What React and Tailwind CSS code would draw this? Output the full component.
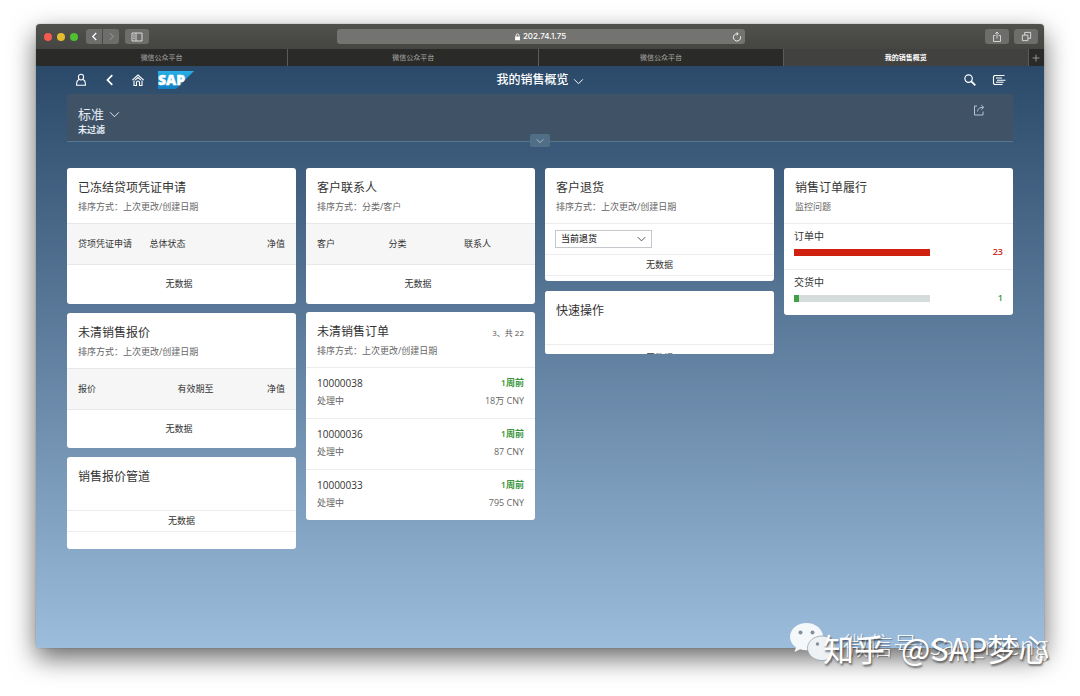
import React from "react";

const FONT = "font-['Open_Sans','Noto_Sans_CJK_SC',sans-serif]";

function Chevron({ className }) {
  return (
    <svg viewBox="0 0 12 8" className={className} fill="none" stroke="currentColor" strokeWidth="1.1" aria-hidden="true">
      <path d="M1 1.5 6 6.5 11 1.5" />
    </svg>
  );
}

function TitleBar() {
  return (
    <div className="flex h-[25px] items-center bg-gradient-to-b from-[#50504d] to-[#454542] pr-[6px] pl-[8px]">
      <div className="flex flex-1 items-center">
        <div className="flex gap-[5px]">
          <span className="size-2 rounded-full bg-[#f6594f]" />
          <span className="size-2 rounded-full bg-[#e3bc2f]" />
          <span className="size-2 rounded-full bg-[#4fc031]" />
        </div>
        <div className="ml-[8px] flex gap-px">
          <button aria-label="后退" className="flex h-[15px] w-4 items-center justify-center rounded-l-[3px] bg-[#6d6d6b] text-white">
            <svg viewBox="0 0 8 10" className="h-[9px] w-[7px]" fill="none" stroke="currentColor" strokeWidth="1.4"><path d="M6 1 2 5l4 4" /></svg>
          </button>
          <button aria-label="前进" className="flex h-[15px] w-4 items-center justify-center rounded-r-[3px] bg-[#6d6d6b] text-[#929290]">
            <svg viewBox="0 0 8 10" className="h-[9px] w-[7px]" fill="none" stroke="currentColor" strokeWidth="1.2"><path d="M2 1l4 4-4 4" /></svg>
          </button>
        </div>
        <button aria-label="边栏" className="ml-[6px] flex h-[15px] w-6 items-center justify-center rounded-[3px] bg-[#6d6d6b] text-[#e4e4e4]">
          <svg viewBox="0 0 12 10" className="h-[10px] w-3" fill="none" stroke="currentColor" strokeWidth=".9"><path d="M1 1h10v8H1zM5 1v8M2.300 3h1.500M2.300 4.800h1.500M2.300 6.600h1.500" /></svg>
        </button>
      </div>
      <div className="flex h-[15px] w-[41%] items-center rounded-[3px] bg-[#737371] pr-[3px] pl-[11px] text-white">
        <div className="flex flex-1 items-center justify-center gap-[2px] text-[8px] leading-[15px] font-medium font-['Inter',sans-serif]">
          <svg viewBox="0 0 8 9" className="h-[8px] w-[7px]" aria-hidden="true"><path d="M1.2 4h5.6v4.2H1.2z" fill="currentColor" /><path d="M2.4 4V2.6a1.6 1.6 0 0 1 3.2 0V4" fill="none" stroke="currentColor" strokeWidth="1" /></svg>
          202.74.1.75
        </div>
        <button aria-label="重新加载">
          <svg viewBox="0 0 10 10" className="size-[10px]" fill="none" stroke="currentColor" strokeWidth=".9"><path d="M8.4 4.2A3.6 3.6 0 1 1 5 1.8h1M4.6.3 6.2 1.8 4.6 3.4" /></svg>
        </button>
      </div>
      <div className="flex flex-1 justify-end gap-[5px] text-[#dededc]">
        <button aria-label="共享" className="flex h-[15px] w-6 items-center justify-center rounded-[3px] bg-[#6d6d6b]">
          <svg viewBox="0 0 10 12" className="h-3 w-[10px]" fill="none" stroke="currentColor" strokeWidth=".9"><path d="M3.4 4.5H1.5v6h7v-6H6.6M5 7.5V1M3.2 2.8 5 1l1.8 1.8" /></svg>
        </button>
        <button aria-label="标签页概览" className="flex h-[15px] w-6 items-center justify-center rounded-[3px] bg-[#6d6d6b]">
          <svg viewBox="0 0 12 12" className="size-[11px]" fill="none" stroke="currentColor" strokeWidth="1"><path d="M1.5 4.5h6v6h-6zM4 4.5v-3h6.500v6.500h-3" /></svg>
        </button>
      </div>
    </div>
  );
}

function TabBar() {
  const tab = "flex h-full items-center justify-center border-r border-[#5c5c5a]";
  return (
    <nav className="grid h-[17px] grid-cols-[252fr_251fr_244fr_245fr_15fr] bg-[#2a2a28] text-[7px] leading-[16px] text-[#a9a9a7]">
      <button className={tab}>微信公众平台</button>
      <button className={tab}>微信公众平台</button>
      <button className={tab}>微信公众平台</button>
      <button className="flex h-full items-center justify-center border-r border-[#5c5c5a] bg-[#41413f] font-bold text-white">我的销售概览</button>
      <button aria-label="新标签页" className="flex items-center justify-center">
        <svg viewBox="0 0 8 8" className="size-2" stroke="currentColor" strokeWidth=".8"><path d="M4 .5v7M.5 4h7" /></svg>
      </button>
    </nav>
  );
}

function SapLogo() {
  return (
    <svg viewBox="0 0 36 18" className="h-[18px] w-9" role="img" aria-label="SAP">
      <defs>
        <linearGradient id="sap" x1="0" y1="0" x2="0" y2="1">
          <stop offset="0" stopColor="#27b0e8" />
          <stop offset="1" stopColor="#1180c4" />
        </linearGradient>
      </defs>
      <path d="M0 0h36L18 18H0z" fill="url(#sap)" />
      <text x="0" y="14" fontFamily="Open Sans" fontWeight="800" fontSize="14" fill="#fff" stroke="#fff" strokeWidth=".4">SAP</text>
    </svg>
  );
}

function ShellBar() {
  return (
    <header className="flex h-[28px] items-center px-[38px] text-white">
      <div className="flex flex-1 items-center">
        <button aria-label="用户">
          <svg viewBox="0 0 14 14" className="size-[14px]" fill="none" stroke="currentColor" strokeWidth="1.100"><path d="M7 1.200c1.600 0 2.600 1.200 2.600 2.800S8.600 7 7 7 4.400 5.600 4.400 4 5.400 1.200 7 1.200zM4.800 6.600C3.200 7.400 2.600 9 2.600 11v1.300h8.800V11c0-2-.6-3.600-2.200-4.400" /></svg>
        </button>
        <button aria-label="返回" className="ml-[15px]">
          <svg viewBox="0 0 14 14" className="size-[14px]" fill="none" stroke="currentColor" strokeWidth="1.700"><path d="M9.300 2.200 4.500 7l4.800 4.800" /></svg>
        </button>
        <button aria-label="主页" className="ml-[14px]">
          <svg viewBox="0 0 14 14" className="size-[14px]" fill="none" stroke="currentColor" strokeWidth="1.100"><path d="M1.300 7.200 7 2l5.700 5.200M3 7.500v5h2.500V9.200C5.500 8.400 6.100 8 7 8s1.500.4 1.500 1.200v3.300H11v-5M4 7.200l3-2.700 3 2.700" /></svg>
        </button>
        <span className="ml-[13px]"><SapLogo /></span>
      </div>
      <button className="flex items-center gap-[4px] text-[12px] leading-[18px] font-medium">
        我的销售概览
        <Chevron className="mt-[3px] h-[7px] w-[11px]" />
      </button>
      <div className="flex flex-1 justify-end gap-[15px]">
        <button aria-label="搜索">
          <svg viewBox="0 0 14 14" className="size-[14px]" fill="none" stroke="currentColor" strokeWidth="1.200"><circle cx="5.600" cy="5.600" r="3.700" /><path d="m8.300 8.300 4 4" strokeWidth="1.800" /></svg>
        </button>
        <button aria-label="通知">
          <svg viewBox="0 0 14 14" className="size-[14px]" fill="none" stroke="currentColor" strokeWidth="1.100"><path d="M12.500 2.500H2.500L1.500 3.500v7l1 1h8M4 5h6M5 7.200h8.500M4 9.300h7.500" /></svg>
        </button>
      </div>
    </header>
  );
}

function FilterBar() {
  return (
    <section className="relative mx-[31px] flex h-[48px] justify-between border-b border-[#54788e] bg-[#3f5266] px-[11px] text-[#e4edf5]">
      <div className="pt-[11px]">
        <button className="flex items-center gap-[5px] text-[13px] leading-[18px]">
          标准
          <Chevron className="h-[7px] w-[11px]" />
        </button>
        <p className="text-[9px] leading-[14px] font-bold">未过滤</p>
      </div>
      <button aria-label="共享" className="mt-[10px] mr-[17px] self-start text-[#b3c5d6]">
        <svg viewBox="0 0 12 12" className="size-3" fill="none" stroke="currentColor" strokeWidth="1"><path d="M4 2H1.500v9h8.500V7.500M4.500 7.500C4.700 4.800 6.500 3.300 10.500 3.300M8.300 1.200l2.400 2.100-2.400 2.200" /></svg>
      </button>
      <button aria-label="展开页眉" className="absolute -bottom-[6px] left-1/2 flex h-[13px] w-[20px] -translate-x-1/2 items-center justify-center rounded-[2px] bg-[#506f86] text-[#cbd9e4]">
        <Chevron className="h-[6px] w-[8px]" />
      </button>
    </section>
  );
}

function Card({ title, subtitle, counter, children }) {
  return (
    <article className="overflow-hidden rounded-[3px] bg-white text-[9px] leading-[12px] text-[#333]">
      <header className="flex min-h-[55px] justify-between px-[11px] pt-[11px]">
        <div>
          <h2 className="text-[12px] leading-[18px]">{title}</h2>
          {subtitle && <p className="mt-[4px] text-[#666]">{subtitle}</p>}
        </div>
        {counter && <span className="mt-[4px] text-[8px] text-[#555]">{counter}</span>}
      </header>
      {children}
    </article>
  );
}

function EmptyTable({ columns }) {
  return (
    <table className="w-full table-fixed border-collapse">
      <thead>
        <tr className="h-[41px] border-y border-[#e8e8e8] bg-[#f6f6f6]">
          {columns.map(([label, cls]) => (
            <th key={label} className={`${cls} font-normal whitespace-nowrap`}>{label}</th>
          ))}
        </tr>
      </thead>
      <tbody>
        <tr className="h-[39px]">
          <td colSpan={columns.length} className="pr-[5px] text-center">无数据</td>
        </tr>
      </tbody>
    </table>
  );
}

const orders = [
  ["10000038", "18万 CNY"],
  ["10000036", "87 CNY"],
  ["10000033", "795 CNY"],
];

function Board() {
  return (
    <main className="grid grid-cols-4 items-start gap-[10px] px-[31px] pt-[26px]">
      <div className="flex flex-col gap-[9px]">
        <Card title="已冻结贷项凭证申请" subtitle="排序方式：上次更改/创建日期">
          <EmptyTable columns={[
            ["贷项凭证申请", "w-[36%] pl-[11px] text-left"],
            ["总体状态", "text-left"],
            ["净值", "pr-[11px] text-right"],
          ]} />
        </Card>
        <Card title="未清销售报价" subtitle="排序方式：上次更改/创建日期">
          <EmptyTable columns={[
            ["报价", "w-[36%] pl-[11px] text-left"],
            ["有效期至", "w-[28%] text-right"],
            ["净值", "pr-[11px] text-right"],
          ]} />
        </Card>
        <Card title="销售报价管道">
          <p className="-mt-[2px] mb-[17px] border-y border-[#ececec] py-[4px] text-center">无数据</p>
        </Card>
      </div>

      <div className="flex flex-col gap-[8px]">
        <Card title="客户联系人" subtitle="排序方式：分类/客户">
          <EmptyTable columns={[
            ["客户", "w-[36%] pl-[11px] text-left"],
            ["分类", "w-[33%] text-left"],
            ["联系人", "text-left"],
          ]} />
        </Card>
        <Card title="未清销售订单" subtitle="排序方式：上次更改/创建日期" counter="3、共 22">
          <ul>
            {orders.map(([id, amount]) => (
              <li key={id} className="flex h-[51px] justify-between border-t border-[#ececec] px-[11px] pt-[8px]">
                <div>
                  <p className="text-[10px] leading-[14px]">{id}</p>
                  <p className="mt-[5px] text-[#666]">处理中</p>
                </div>
                <div className="text-right">
                  <p className="leading-[14px] font-semibold text-[#3c943c]">1周前</p>
                  <p className="mt-[5px] text-[#666]">{amount}</p>
                </div>
              </li>
            ))}
          </ul>
        </Card>
      </div>

      <div className="flex flex-col gap-[10px]">
        <Card title="客户退货" subtitle="排序方式：上次更改/创建日期">
          <div className="border-t border-[#ececec] px-[10px] py-[6px]">
            <div className="relative w-[97px] text-[#333]">
              <select aria-label="视图" className="block h-[18px] w-full appearance-none border border-[#c4c8cc] bg-white pl-[5px] text-[9px] leading-[14px] font-medium">
                <option>当前退货</option>
              </select>
              <Chevron className="pointer-events-none absolute top-[6px] right-[6px] h-[6px] w-[9px]" />
            </div>
          </div>
          <p className="mb-[5px] border-y border-[#ececec] py-[4px] text-center">无数据</p>
        </Card>
        <div className="h-[63px] overflow-hidden rounded-[3px] bg-white">
          <Card title="快速操作">
            <p className="-mt-[2px] border-t border-[#ececec] pt-[7px] text-center">无数据</p>
          </Card>
        </div>
      </div>

      <Card title="销售订单履行" subtitle="监控问题">
        <ProgressRow label="订单中" value="23" percent={100} bar="bg-[#d02010]" text="text-[#cc2a24]" />
        <ProgressRow label="交货中" value="1" percent={4} bar="bg-[#3fa045]" text="text-[#3c943c]" />
      </Card>
    </main>
  );
}

function ProgressRow({ label, value, percent, bar, text }) {
  return (
    <div className="h-[46px] border-t border-[#ececec] px-[10px] pt-[5px]">
      <p className="text-[10px] leading-[14px]">{label}</p>
      <div className="mt-[3px] flex items-center justify-between">
        <div className="h-[7px] w-[65%] bg-[#d6dbdb]">
          <div className={`h-full ${bar}`} style={{ width: `${percent}%` }} />
        </div>
        <span className={`font-semibold ${text}`}>{value}</span>
      </div>
    </div>
  );
}

function Watermark() {
  return (
    <div className="pointer-events-none absolute right-[30px] bottom-[26px] h-[48px] w-[260px] text-white font-['Noto_Sans_CJK_SC',sans-serif]">
      <svg viewBox="0 0 46 42" className="absolute top-0 left-0 h-[42px] w-[46px]" aria-hidden="true">
        <path d="M16.500 1C7.500 1 0 7.200 0 14.800c0 4.300 2.300 8 6 10.500L4.500 30l5.600-2.800c2 .6 4.200 1 6.400 1C25.600 28.200 33 22.300 33 14.800S25.600 1 16.500 1z" fill="#f5f8fb" />
        <circle cx="10.500" cy="10.500" r="2" fill="#82909c" />
        <circle cx="22.500" cy="10.500" r="2" fill="#82909c" />
        <path d="M32 14c-8 0-14.500 5.400-14.500 12.200S24 38.500 32 38.500c1.800 0 3.500-.3 5-.8l4.600 2.300-1.200-4c3.400-2.200 5.600-5.700 5.600-9.800C46 19.400 40 14 32 14z" fill="#eef2f5" stroke="#8b99a6" strokeWidth=".7" />
        <circle cx="27.500" cy="22" r="1.700" fill="#82909c" />
        <circle cx="37" cy="22" r="1.700" fill="#82909c" />
      </svg>
      <span className="absolute top-[5px] left-[53px] text-[25px] leading-[34px] font-light whitespace-nowrap opacity-90 [text-shadow:1px_1px_1px_rgba(0,0,0,.35)]">微信号: sap_meng</span>
      <span className="absolute top-[6px] left-[33px] flex gap-[16px] text-[31px] leading-[40px] whitespace-nowrap [text-shadow:1px_2px_2px_rgba(0,0,0,.5)]">
        <span>知乎</span>
        <span>@SAP梦心</span>
      </span>
    </div>
  );
}

export default function App() {
  return (
    <div lang="zh-CN" className={`relative min-h-screen overflow-hidden bg-white px-[36px] pt-[24px] pb-[48px] ${FONT}`}>
      <div className="flex min-h-[calc(100vh-72px)] flex-col overflow-hidden rounded-[4px] shadow-[0_10px_26px_rgba(0,0,0,.6),0_0_1px_rgba(0,0,0,.6)]">
        <TitleBar />
        <TabBar />
        <div className="flex-1 bg-gradient-to-b from-[#2b4a6a] to-[#9dbddd]">
          <ShellBar />
          <FilterBar />
          <Board />
        </div>
      </div>
      <Watermark />
    </div>
  );
}
